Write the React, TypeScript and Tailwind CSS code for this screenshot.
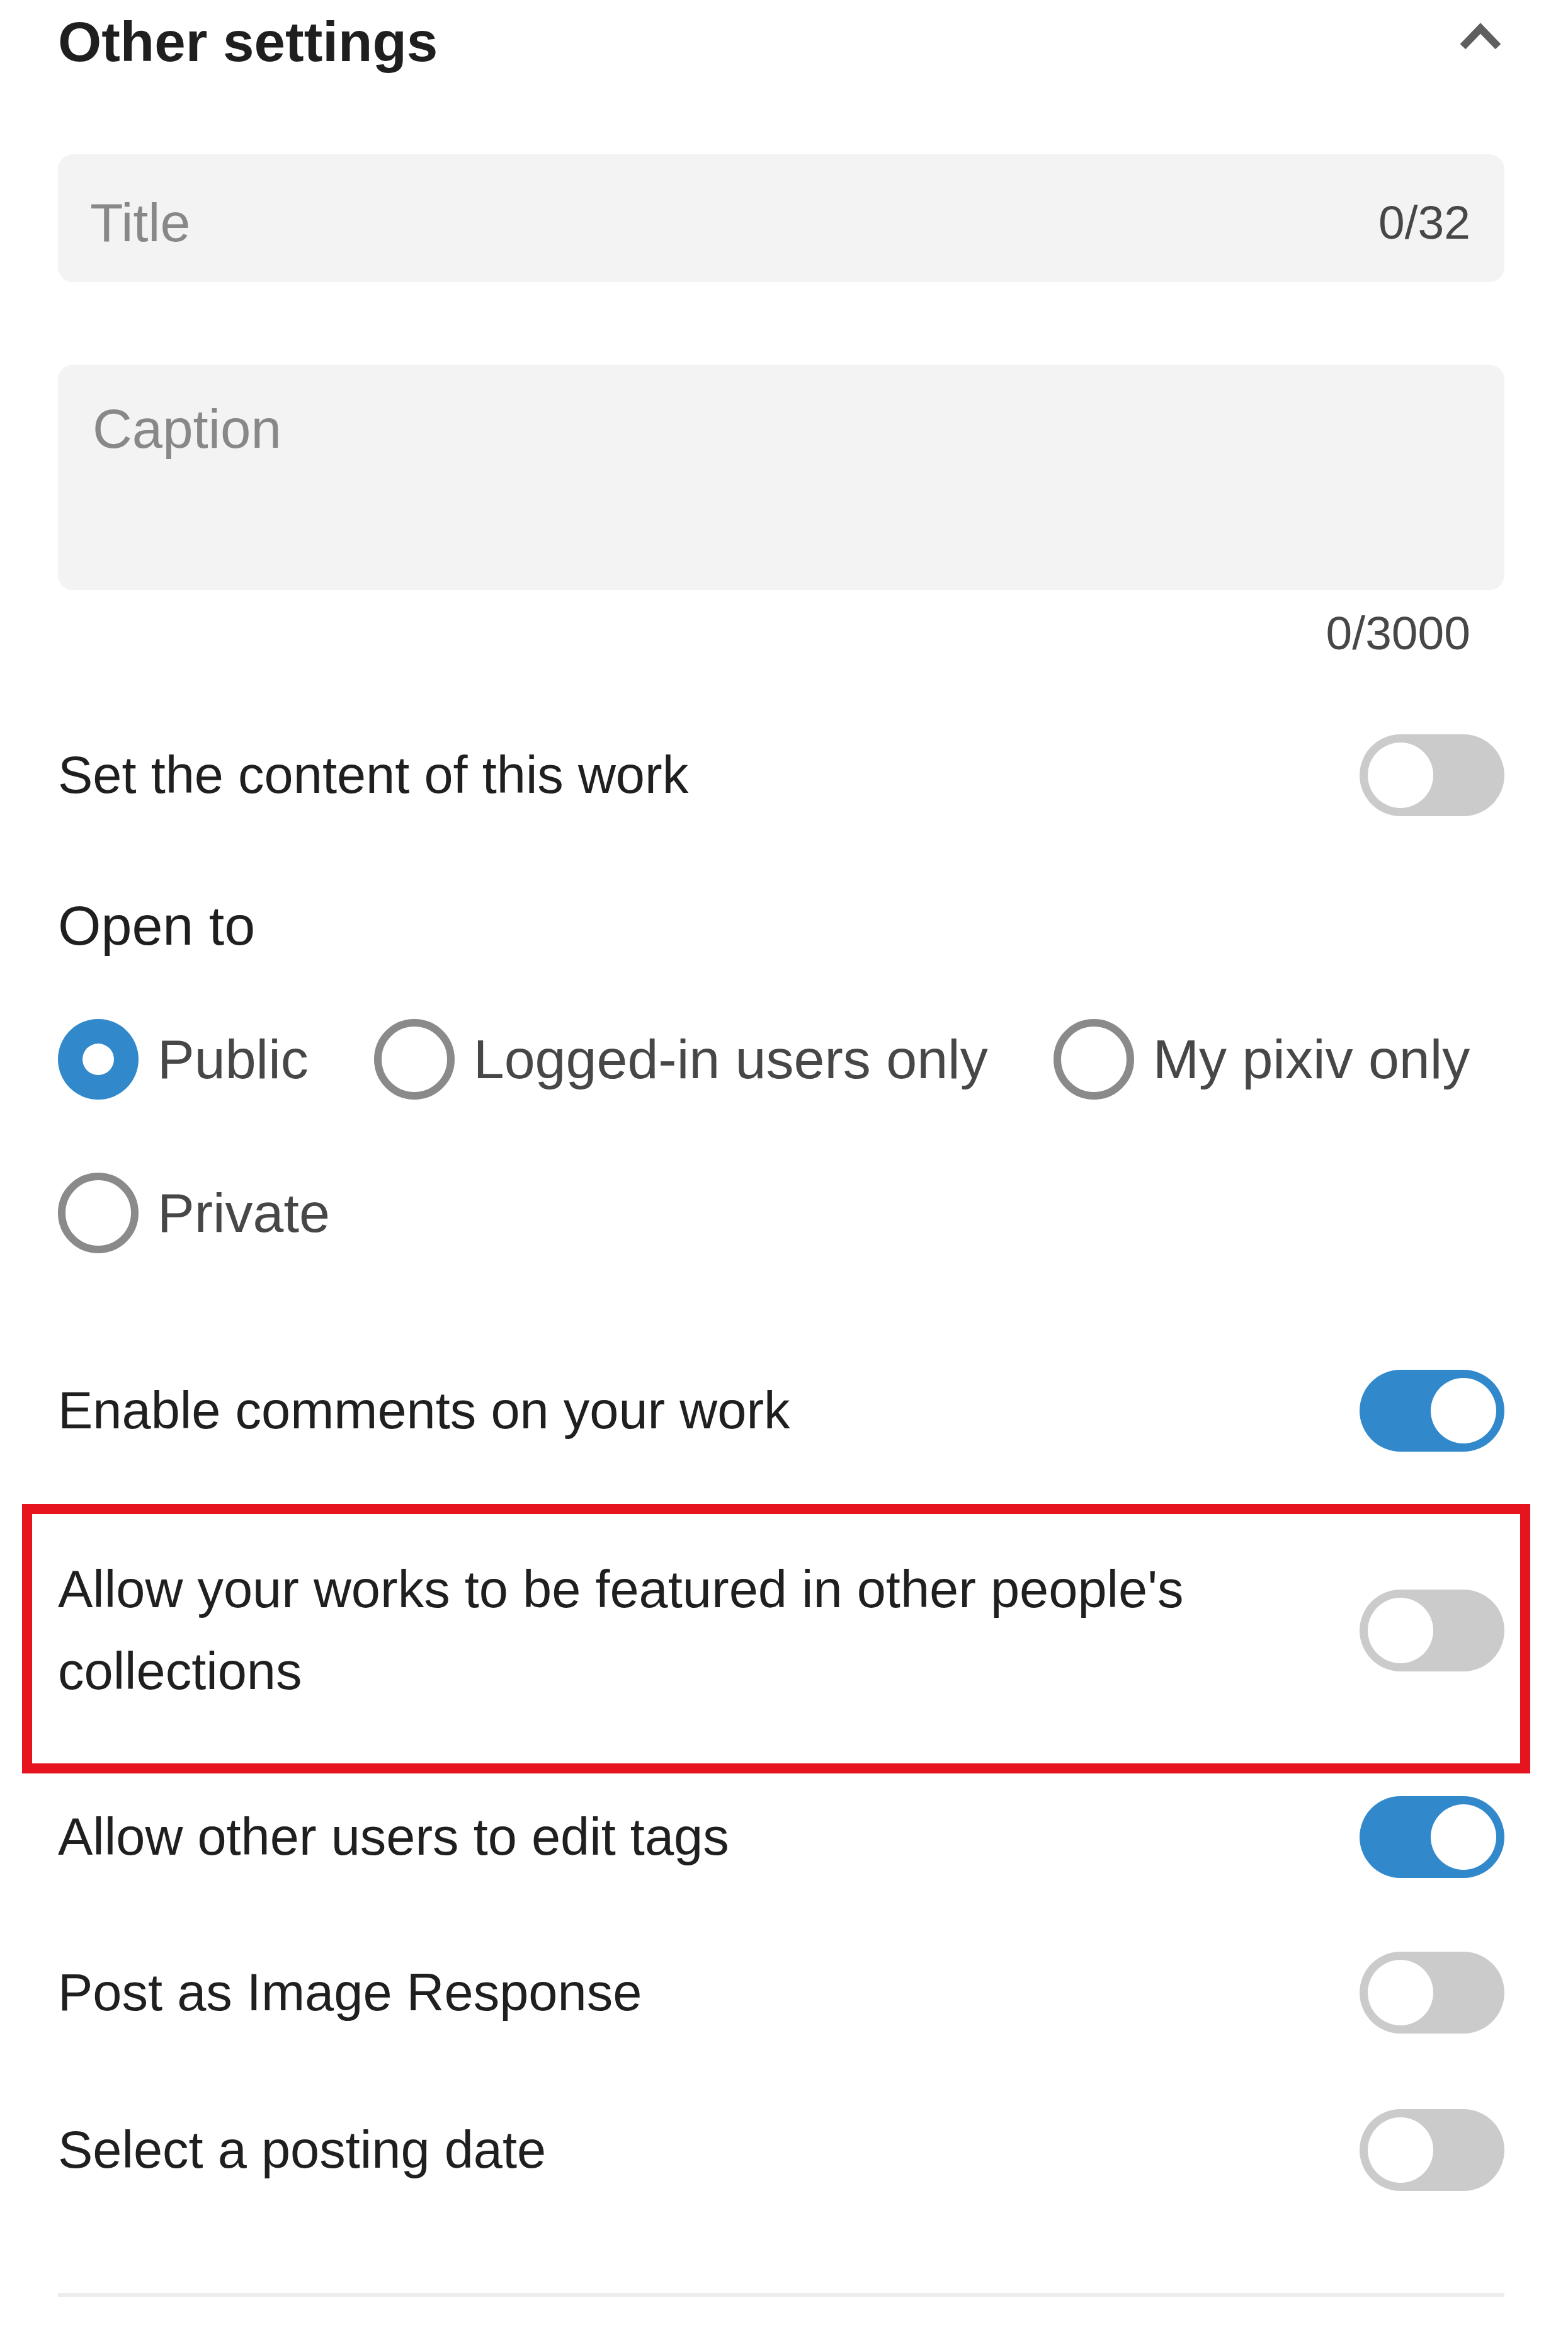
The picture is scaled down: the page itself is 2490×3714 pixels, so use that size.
import React from 'react';

type ToggleProps = { on?: boolean };

function Toggle({ on = false }: ToggleProps) {
    return (
        <div
            className={`flex h-[130px] w-[230px] shrink-0 items-center rounded-full p-[13px] ${
                on ? 'justify-end bg-[#3189cc]' : 'justify-start bg-[#cbcbcb]'
            }`}
        >
            <div className="h-[104px] w-[104px] rounded-full bg-white" />
        </div>
    );
}

function Radio({ label, checked = false }: { label: string; checked?: boolean }) {
    return (
        <div className="flex items-center gap-[30px]">
            {checked ? (
                <div className="flex h-[128px] w-[128px] items-center justify-center rounded-full bg-[#3189cc]">
                    <div className="h-[50px] w-[50px] rounded-full bg-white" />
                </div>
            ) : (
                <div className="h-[128px] w-[128px] rounded-full border-[12px] border-[#8a8a8a] bg-white" />
            )}
            <span className="text-[88px] leading-[100px] text-[#474747]">{label}</span>
        </div>
    );
}

function SettingRow({ label, on = false, className = '' }: { label: string; on?: boolean; className?: string }) {
    return (
        <div className={`flex h-[130px] items-center justify-between ${className}`}>
            <span className="text-[83px] leading-[100px] text-[#1f1f1f]">{label}</span>
            <Toggle on={on} />
        </div>
    );
}

export default function App() {
    return (
        <div className="min-h-screen bg-white pl-[92px] pr-[101px] font-['Liberation_Sans',Arial,Helvetica,sans-serif]">
            {/* Header */}
            <div className="flex h-[132px] items-center justify-between">
                <h2 className="text-[89px] font-bold leading-[132px] text-[#1f1f1f]">Other settings</h2>
                <svg className="mb-[18px] mr-[6px]" width="64" height="42" viewBox="0 0 64 42" fill="none">
                    <polyline points="4,38 32,9 60,38" stroke="#5f5f5f" strokeWidth="12" strokeLinejoin="miter" />
                </svg>
            </div>

            {/* Title */}
            <div className="mt-[113px] flex h-[203px] items-center justify-between rounded-[24px] bg-[#f3f3f3] pl-[51px] pr-[54px] pt-[12px]">
                <span className="text-[86px] leading-[100px] text-[#888888]">Title</span>
                <span className="text-[75px] leading-[100px] text-[#474747]">0/32</span>
            </div>

            {/* Caption */}
            <div className="mt-[131px] h-[358px] rounded-[24px] bg-[#f3f3f3] pl-[55px] pt-[50px]">
                <span className="text-[87px] leading-[104px] text-[#888888]">Caption</span>
            </div>
            <div className="mt-[18px] pr-[54px] text-right text-[75px] leading-[100px] text-[#474747]">0/3000</div>

            <SettingRow label="Set the content of this work" className="mt-[111px]" />

            {/* Open to */}
            <div className="mt-[124px] text-[88px] leading-[100px] text-[#1f1f1f]">Open to</div>
            <div className="mt-[97px] flex h-[130px] items-center gap-x-[104px]">
                <Radio label="Public" checked />
                <Radio label="Logged-in users only" />
                <Radio label="My pixiv only" />
            </div>
            <div className="mt-[114px] flex h-[130px] items-center">
                <Radio label="Private" />
            </div>

            <SettingRow label="Enable comments on your work" on className="mt-[184px]" />

            {/* Highlighted row */}
            <div className="-ml-[57px] -mr-[41px] mt-[83px] border-[16px] border-[#e6141e] pb-[81px] pl-[41px] pr-[25px] pt-[55px]">
                <div className="flex items-center justify-between">
                    <span className="flex-1 text-[83px] leading-[130px] text-[#1f1f1f]">
                        Allow your works to be featured in other people's collections
                    </span>
                    <Toggle />
                </div>
            </div>

            <SettingRow label="Allow other users to edit tags" on className="mt-[36px]" />
            <SettingRow label="Post as Image Response" className="mt-[117px]" />
            <SettingRow label="Select a posting date" className="mt-[120px]" />

            <div className="mt-[162px] h-[6px] bg-[#ededed]" />
        </div>
    );
}
